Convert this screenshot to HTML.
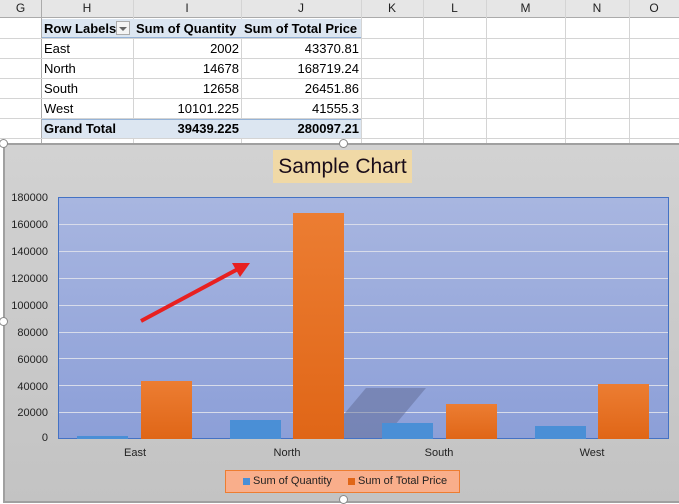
<!DOCTYPE html>
<html><head><style>
*{margin:0;padding:0;box-sizing:border-box}
body{width:679px;height:500px;overflow:hidden;background:#fff;font-family:"Liberation Sans",sans-serif;position:relative}
.a{position:absolute}
.hdr{background:#e6e6e6;height:18px;top:0;border-bottom:1px solid #ababab;font-size:12px;text-align:center;line-height:17px;color:#222}
.vl{position:absolute;width:1px;background:#d4d4d4}
.hl{position:absolute;height:1px;background:#d4d4d4;left:0;width:679px}
.c{position:absolute;font-size:13px;color:#000;line-height:20px;height:20px}
.r{text-align:right}
.b{font-weight:bold}
.yl{position:absolute;left:0;width:48px;text-align:right;font-size:11px;color:#222}
.g{position:absolute;left:59px;width:609px;height:1px;background:#d8dcea}
</style></head><body>
<div class="a hdr" style="left:0;width:679px"></div>
<div class="a" style="left:0;top:0;width:679px;height:18px;font-size:12px;color:#222;line-height:17px">
<span class="a" style="left:0;width:41px;text-align:center">G</span>
<span class="a" style="left:41px;width:92px;text-align:center">H</span>
<span class="a" style="left:133px;width:108px;text-align:center">I</span>
<span class="a" style="left:241px;width:120px;text-align:center">J</span>
<span class="a" style="left:361px;width:62px;text-align:center">K</span>
<span class="a" style="left:423px;width:63px;text-align:center">L</span>
<span class="a" style="left:486px;width:79px;text-align:center">M</span>
<span class="a" style="left:565px;width:64px;text-align:center">N</span>
<span class="a" style="left:629px;width:50px;text-align:center">O</span>
</div>
<div class="vl" style="left:41px;top:0;height:143px;background:#ababab"></div>
<div class="vl" style="left:133px;top:0;height:143px"></div>
<div class="vl" style="left:241px;top:0;height:143px"></div>
<div class="vl" style="left:361px;top:0;height:143px"></div>
<div class="vl" style="left:423px;top:0;height:143px"></div>
<div class="vl" style="left:486px;top:0;height:143px"></div>
<div class="vl" style="left:565px;top:0;height:143px"></div>
<div class="vl" style="left:629px;top:0;height:143px"></div>
<div class="hl" style="top:38px"></div><div class="hl" style="top:58px"></div><div class="hl" style="top:78px"></div><div class="hl" style="top:98px"></div><div class="hl" style="top:118px"></div><div class="hl" style="top:138px"></div>
<div class="a" style="left:42px;top:19px;width:319px;height:19px;background:#dce6f1;border-bottom:1px solid #95b3d7"></div>
<div class="a" style="left:42px;top:119px;width:319px;height:19px;background:#dce6f1;border-top:1px solid #95b3d7"></div>
<div class="a" style="left:116px;top:21px;width:14px;height:14px;border:1px solid #aaa;background:#f4f4f4"></div>
<div class="a" style="left:119px;top:27px;width:0;height:0;border-left:4px solid transparent;border-right:4px solid transparent;border-top:4px solid #666"></div>
<div class="c b" style="left:44px;top:19px">Row Labels</div>
<div class="c b" style="left:136px;top:19px">Sum of Quantity</div>
<div class="c b" style="left:244px;top:19px">Sum of Total Price</div>
<div class="c" style="left:44px;top:39px">East</div><div class="c" style="left:44px;top:59px">North</div><div class="c" style="left:44px;top:79px">South</div><div class="c" style="left:44px;top:99px">West</div>
<div class="c b" style="left:44px;top:119px">Grand Total</div>
<div class="c r" style="left:133px;width:106px;top:39px">2002</div><div class="c r" style="left:133px;width:106px;top:59px">14678</div><div class="c r" style="left:133px;width:106px;top:79px">12658</div><div class="c r" style="left:133px;width:106px;top:99px">10101.225</div><div class="c r b" style="left:133px;width:106px;top:119px">39439.225</div>
<div class="c r" style="left:241px;width:118px;top:39px">43370.81</div><div class="c r" style="left:241px;width:118px;top:59px">168719.24</div><div class="c r" style="left:241px;width:118px;top:79px">26451.86</div><div class="c r" style="left:241px;width:118px;top:99px">41555.3</div><div class="c r b" style="left:241px;width:118px;top:119px">280097.21</div>
<div class="a" style="left:3px;top:143px;width:680px;height:360px;background:linear-gradient(#d2d2d2,#c3c3c3);border:2px solid #a0a0a0;border-right:none"></div>
<div class="a" style="left:273px;top:150px;width:139px;height:33px;background:#f0d9a6;font-size:21px;line-height:33px;text-align:center;color:#1a0d1a">Sample Chart</div>
<div class="a" style="left:58px;top:197px;width:611px;height:242px;background:linear-gradient(#a8b6e0,#8c9fd8);border:1px solid #4472c4"></div>
<div class="g" style="top:224px"></div><div class="g" style="top:251px"></div><div class="g" style="top:278px"></div><div class="g" style="top:305px"></div><div class="g" style="top:332px"></div><div class="g" style="top:358px"></div><div class="g" style="top:385px"></div><div class="g" style="top:412px"></div>
<div class="yl" style="top:192px">180000</div><div class="yl" style="top:219px">160000</div><div class="yl" style="top:246px">140000</div><div class="yl" style="top:273px">120000</div><div class="yl" style="top:300px">100000</div><div class="yl" style="top:327px">80000</div><div class="yl" style="top:354px">60000</div><div class="yl" style="top:381px">40000</div><div class="yl" style="top:407px">20000</div><div class="yl" style="top:432px">0</div>
<div class="a" style="left:345px;top:388px;width:60px;height:50px;background:rgba(90,100,140,.45);transform:skewX(-40deg)"></div>
<div class="a" style="left:77px;top:436px;width:51px;height:3px;background:#4a8fd6"></div>
<div class="a" style="left:141px;top:381px;width:51px;height:58px;background:linear-gradient(#ec7d32,#e06617)"></div>
<div class="a" style="left:230px;top:420px;width:51px;height:19px;background:#4a8fd6"></div>
<div class="a" style="left:293px;top:213px;width:51px;height:226px;background:linear-gradient(#ec7d32,#e06617)"></div>
<div class="a" style="left:382px;top:423px;width:51px;height:16px;background:#4a8fd6"></div>
<div class="a" style="left:446px;top:404px;width:51px;height:35px;background:linear-gradient(#ec7d32,#e06617)"></div>
<div class="a" style="left:535px;top:426px;width:51px;height:13px;background:#4a8fd6"></div>
<div class="a" style="left:598px;top:384px;width:51px;height:55px;background:linear-gradient(#ec7d32,#e06617)"></div>
<svg class="a" style="left:130px;top:255px" width="130" height="75"><line x1="11" y1="66" x2="108" y2="14" stroke="#e82020" stroke-width="4"/><polygon points="120,8 102,8 110,22" fill="#e82020"/></svg>
<div class="a" style="left:105px;top:447px;width:60px;text-align:center;font-size:11px;color:#222">East</div>
<div class="a" style="left:257px;top:447px;width:60px;text-align:center;font-size:11px;color:#222">North</div>
<div class="a" style="left:409px;top:447px;width:60px;text-align:center;font-size:11px;color:#222">South</div>
<div class="a" style="left:562px;top:447px;width:60px;text-align:center;font-size:11px;color:#222">West</div>
<div class="a" style="left:225px;top:470px;width:235px;height:23px;background:#f9ae8b;border:1px solid #ed7d31;font-size:11px;color:#222;line-height:21px">
<span class="a" style="left:17px;top:7px;width:7px;height:7px;background:#4a8fd6"></span><span class="a" style="left:27px">Sum of Quantity</span>
<span class="a" style="left:122px;top:7px;width:7px;height:7px;background:#e06617"></span><span class="a" style="left:132px">Sum of Total Price</span>
</div>
<div class="a" style="left:-1px;top:139px;width:9px;height:9px;border-radius:50%;background:#fff;border:1px solid #888"></div>
<div class="a" style="left:339px;top:139px;width:9px;height:9px;border-radius:50%;background:#fff;border:1px solid #888"></div>
<div class="a" style="left:-1px;top:317px;width:9px;height:9px;border-radius:50%;background:#fff;border:1px solid #888"></div>
<div class="a" style="left:339px;top:495px;width:9px;height:9px;border-radius:50%;background:#fff;border:1px solid #888"></div>
</body></html>
